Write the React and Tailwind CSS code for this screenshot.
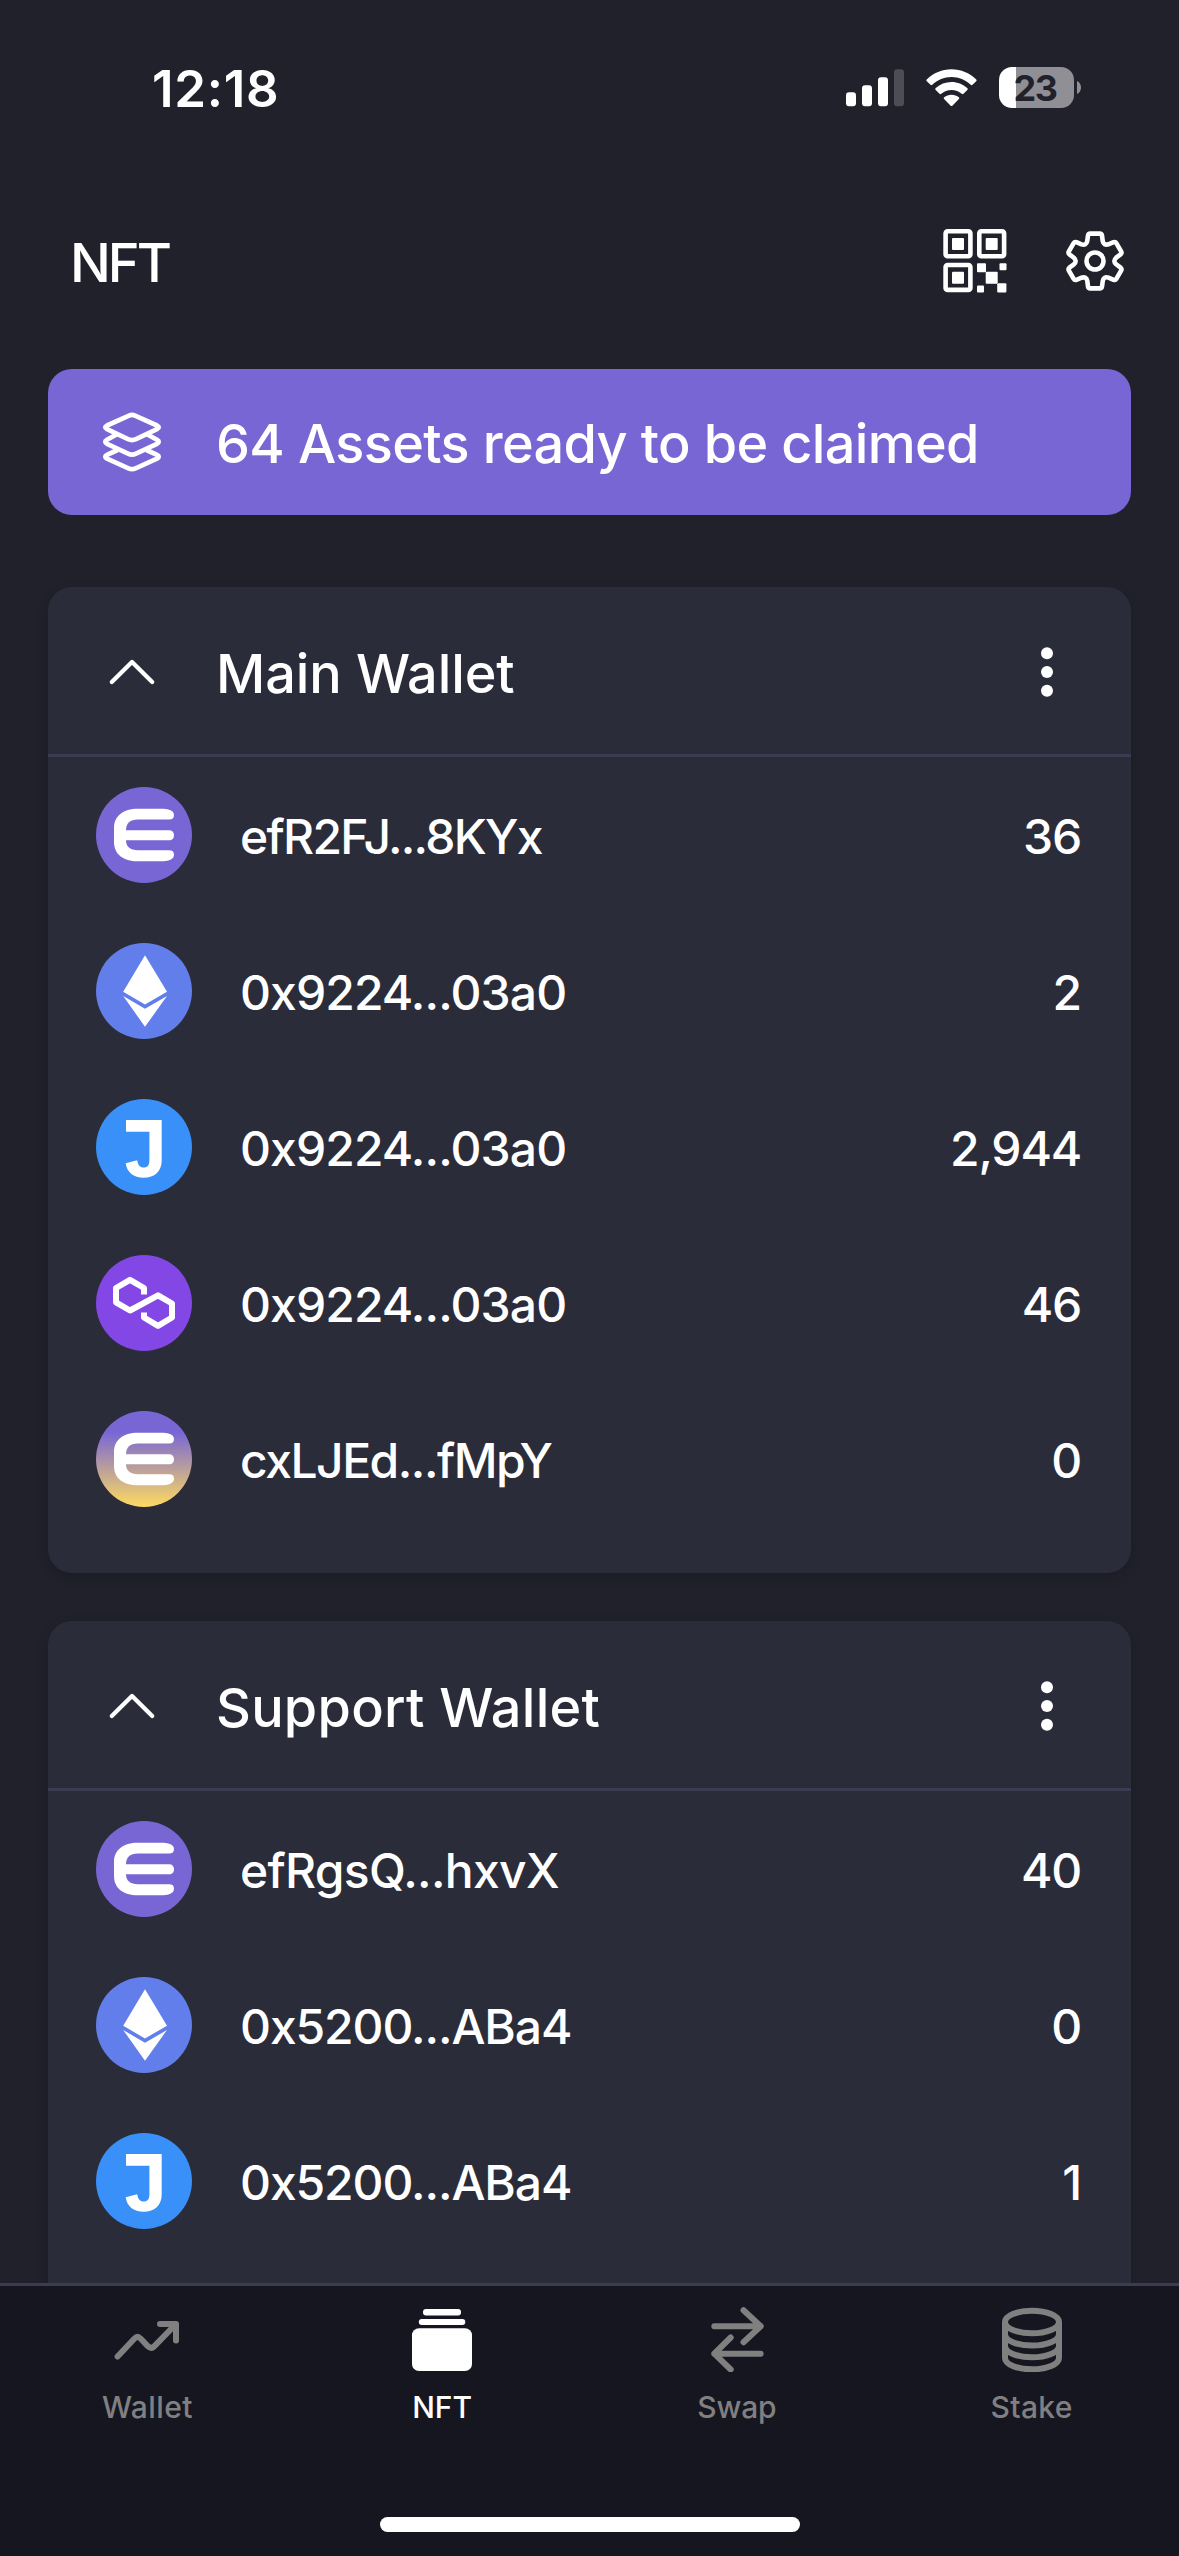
import React from "react";

const point = (x, y, turn) => {
  const a = (turn * Math.PI) / 3;
  const px = 30 + x * Math.cos(a) - y * Math.sin(a);
  const py = 31 + x * Math.sin(a) + y * Math.cos(a);
  return `${px.toFixed(2)} ${py.toFixed(2)}`;
};

// One tooth, repeated six times around the centre.
const gearPath =
  [0, 1, 2, 3, 4, 5]
    .map((k) =>
      [
        `${k === 0 ? "M" : "L"}${point(-7, -25.5, k)}`,
        `Q${point(-6.6, -27.4, k)} ${point(-4.8, -27.4, k)}`,
        `L${point(4.8, -27.4, k)}`,
        `Q${point(6.6, -27.4, k)} ${point(7, -25.5, k)}`,
        `L${point(7.7, -20, k)}`,
        `Q${point(8.7, -15.2, k)} ${point(13.4, -16.7, k)}`,
      ].join(""),
    )
    .join("") + "Z";

function Signal() {
  return (
    <svg width="58" height="38" viewBox="0 0 58 38" fill="#fff">
      <rect x="0" y="23.3" width="10" height="14" rx="3" />
      <rect x="16" y="16.3" width="10" height="21" rx="3" />
      <rect x="32" y="8.3" width="10" height="29" rx="3" />
      <rect x="48" y="0.3" width="10" height="37" rx="3" fillOpacity="0.2" />
    </svg>
  );
}

function Wifi() {
  return (
    <svg width="51" height="38" viewBox="0 0 51 38" fill="#fff">
      <path d="M25.5 0.3C35 .3 43.5 4 50 10.2C50.8 11 50.8 11.6 50.2 12.2L46.5 15.8C45.9 16.4 45.3 16.3 44.7 15.8C39.5 11 33 8 25.5 8S11.5 11 6.3 15.8C5.7 16.3 5.1 16.4 4.5 15.8L.8 12.2C.2 11.6 .2 11 1 10.2C7.5 4 16 .3 25.5 .3Z" />
      <path d="M25.5 13C31.5 13 37 15.3 41.2 19.1C41.9 19.8 41.9 20.4 41.3 21L37.5 24.8C36.9 25.4 36.3 25.3 35.7 24.8C33 22.3 29.5 20.9 25.5 20.9S18 22.3 15.3 24.8C14.7 25.3 14.1 25.4 13.5 24.8L9.7 21C9.1 20.4 9.1 19.8 9.8 19.1C14 15.3 19.5 13 25.5 13Z" />
      <path d="M25.5 25.7C28.4 25.7 30.8 26.7 32.8 28.3C33.5 28.9 33.4 29.5 32.9 30.1L26.6 36.5C25.9 37.2 25.1 37.2 24.4 36.5L18.1 30.1C17.6 29.5 17.5 28.9 18.2 28.3C20.2 26.7 22.6 25.7 25.5 25.7Z" />
    </svg>
  );
}

function Battery() {
  return (
    <div className="flex items-center gap-[3px]">
      <div className="flex h-[41px] w-[75px] items-center justify-center rounded-[13px] bg-[linear-gradient(to_right,#fff_17px,#8f8f95_17px)] pr-[3px] text-[36px] leading-none font-bold tracking-[-1.4px] text-[#21212c]">
        23
      </div>
      <svg width="4" height="13" viewBox="0 0 4 13" fill="#8f8f95">
        <path d="M0 0C2.5 1.2 4 3.6 4 6.5S2.5 11.8 0 13Z" />
      </svg>
    </div>
  );
}

function QrIcon() {
  return (
    <svg width="64" height="64" viewBox="0 0 64 64" fill="#fff">
      <g fill="none" stroke="#fff" strokeWidth="4.6">
        <rect x="2.6" y="2.3" width="24.8" height="24.9" rx="2" />
        <rect x="36.3" y="2.3" width="24.8" height="24.9" rx="2" />
        <rect x="2.6" y="36" width="24.8" height="24.9" rx="2" />
      </g>
      <rect x="9" y="9" width="12" height="12" rx="1" />
      <rect x="42.7" y="9" width="12" height="12" rx="1" />
      <rect x="9" y="42.7" width="12" height="12" rx="1" />
      <rect x="34" y="34.2" width="9" height="9" rx="1" />
      <rect x="56.5" y="34.2" width="7" height="7" rx="1" />
      <rect x="42.7" y="42.7" width="12" height="12" rx="1" />
      <rect x="34" y="56.5" width="7" height="7" rx="1" />
      <rect x="54.2" y="54.2" width="9.2" height="9.3" rx="1" />
    </svg>
  );
}

function GearIcon() {
  return (
    <svg width="60" height="62" viewBox="0 0 60 62" fill="none" stroke="#fff" strokeWidth="4.6" strokeLinejoin="round">
      <path d={gearPath} />
      <circle cx="30" cy="31" r="8.5" />
    </svg>
  );
}

function LayersIcon() {
  return (
    <svg width="60" height="60" viewBox="0 0 60 60" fill="none" stroke="#fff" strokeWidth="4.7" strokeLinejoin="round">
      <path d="M27 3.6Q30 2.2 33 3.6L55 13.5Q58.5 15.3 55 17.2L34 27.2Q30 29 26 27.2L5 17.2Q1.500 15.3 5 13.5Z" />
      <path d="M15.5 22L5 27.8Q1.5 29.8 5 31.8L26 41.6Q30 43.5 34 41.6L55 31.8Q58.5 29.8 55 27.8L44.5 22" />
      <path d="M15.5 38L5 42.9Q1.5 44.7 5 46.6L26.5 56.3Q30 57.8 33.5 56.3L55 46.6Q58.5 44.7 55 42.9L44.5 38" />
    </svg>
  );
}

function ChevronUp() {
  return (
    <svg width="48" height="28" viewBox="0 0 48 28" fill="none" stroke="#fff" strokeWidth="4.3" strokeLinecap="round" strokeLinejoin="round">
      <path d="M3.8 24L24 4L44.2 24" />
    </svg>
  );
}

function MoreIcon() {
  return (
    <svg width="14" height="52" viewBox="0 0 14 52" fill="#fff">
      <circle cx="7" cy="7.2" r="6" />
      <circle cx="7" cy="26" r="6" />
      <circle cx="7" cy="44.8" r="6" />
    </svg>
  );
}

function EnjinMark() {
  return (
    <svg width="96" height="96" viewBox="0 0 96 96" fill="#fff">
      <path d="M42 21.7H64C73 21.7 78 23.5 78 28C78 31 76.5 32.5 73 32.5H42C34 32.5 30 36.5 30 43.2H73C76.3 43.2 78 45.2 78 48.2S76.3 53.3 73 53.3H30C30 59.5 34 63.3 42 63.3H73C76.5 63.3 78 64.8 78 67.7C78 72.2 73 74.3 64 74.3H42C27 74.3 18 67 18 55V41C18 29 27 21.7 42 21.7Z" />
    </svg>
  );
}

function EthereumMark() {
  return (
    <svg width="96" height="96" viewBox="0 0 96 96" fill="#fff">
      <path d="M49 12.3L71 48.7L49 61.5L27.2 48.7Z" />
      <path d="M27.2 53L49 65.8L71 53L49 83.8Z" />
    </svg>
  );
}

function JumpnetMark() {
  return (
    <svg width="96" height="96" viewBox="0 0 96 96" fill="#fff">
      <path d="M30 21H65.7V61.5C65.7 72.5 58.5 78.7 47.7 78.7C37.5 78.7 31 73.5 29.7 64.3L41.2 61.3C42 66.2 44 68.6 47.6 68.6C51.6 68.6 53.4 66 53.4 61.3V32.8H30Z" />
    </svg>
  );
}

function PolygonMark() {
  return (
    <svg width="96" height="96" viewBox="0 0 96 96" fill="none" stroke="#fff" strokeWidth="6" strokeLinejoin="round">
      <path d="M48 39.5V33L34 24.8L20 33V47.3L34 55.5L62 40.3L76 48.5V62.5L62 70.8L48 62.5V57.5" />
    </svg>
  );
}

const chains = {
  enjin: { bg: "bg-[#7866d5]", Mark: EnjinMark },
  ethereum: { bg: "bg-[#627eea]", Mark: EthereumMark },
  jumpnet: { bg: "bg-[#3890f8]", Mark: JumpnetMark },
  polygon: { bg: "bg-[#8247e5]", Mark: PolygonMark },
  canary: { bg: "bg-[linear-gradient(to_bottom,#7866d5_22%,#ffdb60_100%)]", Mark: EnjinMark },
};

const wallets = [
  {
    name: "Main Wallet",
    nameSpacing: "tracking-[-0.1px]",
    rows: [
      { chain: "enjin", address: "efR2FJ...8KYx", spacing: "tracking-[-1.7px]", count: "36" },
      { chain: "ethereum", address: "0x9224...03a0", spacing: "tracking-[-0.9px]", count: "2" },
      { chain: "jumpnet", address: "0x9224...03a0", spacing: "tracking-[-0.9px]", count: "2,944" },
      { chain: "polygon", address: "0x9224...03a0", spacing: "tracking-[-0.9px]", count: "46" },
      { chain: "canary", address: "cxLJEd...fMpY", spacing: "tracking-[-1.5px]", count: "0" },
    ],
  },
  {
    name: "Support Wallet",
    nameSpacing: "tracking-[0.25px]",
    rows: [
      { chain: "enjin", address: "efRgsQ...hxvX", spacing: "tracking-[-0.68px]", count: "40" },
      { chain: "ethereum", address: "0x5200...ABa4", spacing: "tracking-[-1.1px]", count: "0" },
      { chain: "jumpnet", address: "0x5200...ABa4", spacing: "tracking-[-1.1px]", count: "1" },
    ],
  },
];

function WalletCard({ wallet }) {
  return (
    <section className="min-h-[986px] shrink-0 rounded-3xl bg-[#2b2c3a] shadow-[0_4px_12px_rgba(0,0,0,0.18)]">
      <header className="flex h-[170px] items-center border-b-[3px] border-[#3c3b51] pt-0.5 pr-[77px]">
        <div className="flex w-[168px] justify-center">
          <ChevronUp />
        </div>
        <h2 className={`flex-1 pt-1 text-[54px] leading-none font-medium ${wallet.nameSpacing}`}>{wallet.name}</h2>
        <MoreIcon />
      </header>
      <ul>
        {wallet.rows.map((row, i) => {
          const { bg, Mark } = chains[row.chain];
          return (
            <li key={i} className="flex h-[156px] items-center pr-[50px] pl-12 text-[48px] leading-none font-medium">
              <span className={`mr-12 size-24 overflow-hidden rounded-full ${bg}`}>
                <Mark />
              </span>
              <span className={`flex-1 pt-[3px] ${row.spacing}`}>{row.address}</span>
              <span className="pt-[3px] tracking-[-1.2px]">{row.count}</span>
            </li>
          );
        })}
      </ul>
    </section>
  );
}

function TrendIcon() {
  return (
    <svg width="66" height="66" viewBox="0 0 66 66" fill="none" stroke="currentColor" strokeWidth="6" strokeLinecap="round" strokeLinejoin="round">
      <path d="M3.6 50.5L20.5 32.5Q23.5 29.5 26.5 32.5L34 40.3Q37.2 43.3 40.2 40.3L61.5 18.5" />
      <path d="M46 18H62V34.5" />
    </svg>
  );
}

function CollectionIcon() {
  return (
    <svg width="66" height="66" viewBox="0 0 66 66" fill="currentColor">
      <rect x="14" y="3" width="38" height="6.5" rx="3" />
      <rect x="9.8" y="13" width="46.5" height="6" rx="3" />
      <rect x="3" y="22.3" width="60" height="42.7" rx="7" />
    </svg>
  );
}

function SwapIcon() {
  return (
    <svg width="66" height="66" viewBox="0 0 66 66" fill="none" stroke="currentColor" strokeWidth="6" strokeLinecap="round" strokeLinejoin="round">
      <path d="M10.3 20.3H56.7M39.5 4.3L56.7 20.3L39.5 36.3" />
      <path d="M56.7 47.7H10.3M26.7 31.5L10.3 47.7L26.7 63.5" />
    </svg>
  );
}

function StakeIcon() {
  return (
    <svg width="66" height="66" viewBox="0 0 66 66" fill="none" stroke="currentColor" strokeWidth="6">
      <ellipse cx="33" cy="16" rx="27" ry="11.3" />
      <path d="M6 16V52C6 58.200 18 63.3 33 63.3S60 58.2 60 52V16" />
      <path d="M6 28.2C6 34.4 18 39.5 33 39.5S60 34.4 60 28.2" />
      <path d="M6 40C6 46.2 18 51.3 33 51.3S60 46.2 60 40" />
    </svg>
  );
}

const tabs = [
  { label: "Wallet", Icon: TrendIcon, spacing: "tracking-[0.4px]" },
  { label: "NFT", Icon: CollectionIcon, spacing: "tracking-normal", active: true },
  { label: "Swap", Icon: SwapIcon, spacing: "tracking-[-0.2px]" },
  { label: "Stake", Icon: StakeIcon, spacing: "tracking-[0.4px]" },
];

export default function App() {
  return (
    <div className="flex h-[2556px] w-[1179px] flex-col overflow-hidden bg-[#21212c] font-['Inter',sans-serif] text-white">
      <div className="flex h-[176px] shrink-0 items-center justify-between pr-[98px] pl-[152px]">
        <span className="text-[51px] leading-none font-semibold tracking-[0.7px]">12:18</span>
        <div className="flex items-center gap-[22px] pb-px">
          <Signal />
          <Wifi />
          <Battery />
        </div>
      </div>

      <header className="flex h-[171px] shrink-0 items-center justify-between pr-[54px] pl-[70px]">
        <h1 className="pt-0.5 text-[54px] leading-none font-medium tracking-[-3px]">NFT</h1>
        <div className="flex items-center gap-[58px] pb-0.5">
          <QrIcon />
          <GearIcon />
        </div>
      </header>

      <main className="flex min-h-0 flex-1 flex-col overflow-hidden px-12 pt-[22px]">
        <div className="mb-[72px] flex h-[146px] shrink-0 items-center rounded-3xl bg-[#7866d5]">
          <div className="flex w-[168px] justify-center">
            <LayersIcon />
          </div>
          <p className="pt-1 text-[54px] leading-none font-medium tracking-[-0.65px]">64 Assets ready to be claimed</p>
        </div>
        <div className="flex flex-col gap-12">
          {wallets.map((wallet) => (
            <WalletCard key={wallet.name} wallet={wallet} />
          ))}
        </div>
      </main>

      <nav className="flex h-[273px] shrink-0 flex-col items-center justify-between border-t-[3px] border-[#3c3b51] bg-[#161621] pt-5 pb-6">
        <div className="grid w-full grid-cols-4">
          {tabs.map(({ label, Icon, spacing, active }) => (
            <div key={label} className={`flex flex-col items-center gap-5 ${active ? "text-white" : "text-[#808081]"}`}>
              <Icon />
              <span className={`text-[30px] leading-none font-medium ${spacing}`}>{label}</span>
            </div>
          ))}
        </div>
        <div className="h-[15px] w-[420px] rounded-full bg-white" />
      </nav>
    </div>
  );
}
